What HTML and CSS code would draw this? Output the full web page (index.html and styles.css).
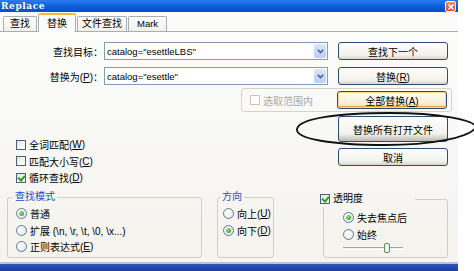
FILE: index.html
```html
<!DOCTYPE html>
<html lang="zh-CN">
<head>
    <meta charset="UTF-8">
    <title>Replace</title>
    <link rel="stylesheet" href="styles.css">
</head>
<body>
    <div class="window">
        <div class="titlebar">
            <span class="title">Replace</span>
            <span class="close">
                <svg width="8" height="8" viewBox="0 0 8 8"><path d="M1.5 1.5 L6.5 6.5 M6.5 1.5 L1.5 6.5" stroke="#fff" stroke-width="1.6"/></svg>
            </span>
        </div>

        <div class="tabs">
            <div class="tab">查找</div>
            <div class="tab active">替换</div>
            <div class="tab narrow">文件查找</div>
            <div class="tab latin">Mark</div>
        </div>

        <div class="panel">
            <div class="field-row">
                <label class="field-label">查找目标：</label>
                <div class="combo">
                    <span class="combo-text">catalog="esettleLBS"</span>
                    <span class="combo-arrow"><svg width="7" height="5" viewBox="0 0 7 5"><path d="M0.8 0.8 L3.5 3.6 L6.2 0.8" fill="none" stroke="#4d6185" stroke-width="1.5"/></svg></span>
                </div>
                <button class="btn">查找下一个</button>
            </div>
            <div class="field-row">
                <label class="field-label">替换为(<u>P</u>)：</label>
                <div class="combo">
                    <span class="combo-text">catalog="esettle"</span>
                    <span class="combo-arrow"><svg width="7" height="5" viewBox="0 0 7 5"><path d="M0.8 0.8 L3.5 3.6 L6.2 0.8" fill="none" stroke="#4d6185" stroke-width="1.5"/></svg></span>
                </div>
                <button class="btn">替换(<u>R</u>)</button>
            </div>

            <div class="scope-box">
                <span class="check disabled"><span class="box"></span>选取范围内</span>
                <button class="btn default">全部替换(<u>A</u>)</button>
            </div>

            <div class="middle">
                <div class="options">
                    <span class="check"><span class="box"></span>全词匹配(<u>W</u>)</span>
                    <span class="check"><span class="box"></span>匹配大小写(<u>C</u>)</span>
                    <span class="check"><span class="box checked"></span>循环查找(<u>D</u>)</span>
                </div>
                <div class="side-buttons">
                    <button class="btn tall">替换所有打开文件</button>
                    <button class="btn">取消</button>
                </div>
            </div>

            <div class="groups">
                <fieldset class="group mode">
                    <legend>查找模式</legend>
                    <span class="radio"><span class="dot on"></span>普通</span>
                    <span class="radio"><span class="dot"></span>扩展 (\n, \r, \t, \0, \x...)</span>
                    <span class="radio"><span class="dot"></span>正则表达式(<u>E</u>)</span>
                </fieldset>
                <fieldset class="group direction">
                    <legend>方向</legend>
                    <span class="radio"><span class="dot"></span>向上(<u>U</u>)</span>
                    <span class="radio"><span class="dot on"></span>向下(<u>D</u>)</span>
                </fieldset>
                <fieldset class="group opacity">
                    <legend><span class="check"><span class="box checked"></span>透明度</span></legend>
                    <span class="radio"><span class="dot on"></span>失去焦点后</span>
                    <span class="radio"><span class="dot"></span>始终</span>
                    <div class="slider"><span class="track"></span><span class="thumb"></span></div>
                </fieldset>
            </div>
        </div>

        <div class="bottom-bar"></div>
    </div>

    <!-- hand-drawn annotation around the button -->
    <svg class="annotation" width="474" height="271" viewBox="0 0 474 271">
        <path d="M297 129 C299 118 340 113 390 113 C440 113 474 120 476 127 C470 138 430 145 385 145 C333 145 295 139 297 129 Z" fill="none" stroke="#111" stroke-width="1.8"/>
    </svg>
</body>
</html>
```

FILE: styles.css
```css
body {
    margin: 0;
    width: 474px;
    height: 271px;
    overflow: hidden;
    position: relative;
    background: #fff;
    font-family: "Liberation Sans", "Noto Sans CJK SC", sans-serif;
    font-size: 10px;
    color: #000;
}
u {
    text-decoration: underline;
}
.window {
    width: 458px;
    height: 271px;
    display: flex;
    flex-direction: column;
    background: #f6f5f0;
}
.titlebar {
    height: 12px;
    display: flex;
    align-items: center;
    justify-content: space-between;
    background: linear-gradient(#2d7bf0, #0a5ad8 60%, #0850c8);
    color: #fff;
}
.title {
    font-family: "DejaVu Serif", serif;
    font-weight: bold;
    font-size: 9px;
    letter-spacing: 0.6px;
    line-height: 12px;
    padding-left: 1px;
}
.close {
    width: 9px;
    height: 9px;
    margin-right: 2px;
    margin-top: 1px;
    display: flex;
    align-items: center;
    justify-content: center;
    background: linear-gradient(#f08a6c, #d9481f);
    border: 1px solid #fff;
    border-radius: 2px;
}
.tabs {
    height: 20px;
    display: flex;
    align-items: flex-end;
    padding-left: 3px;
    background: #fbfbf9;
}
.tab {
    height: 14px;
    line-height: 14px;
    padding: 0 6px;
    border: 1px solid #a8afb0;
    border-bottom: none;
    border-radius: 2px 2px 0 0;
    background: linear-gradient(#fefefe, #f1f0ea);
    font-size: 10px;
}
.tab.narrow {
    padding: 0 4px;
}
.tab.latin {
    font-size: 9.5px;
    padding: 0 8px;
}
.tab.active {
    height: 17px;
    line-height: 17px;
    margin-bottom: -1px;
    background: #fcfcfe;
    border-top: 2px solid #f5b93d;
    padding: 0 8px;
    position: relative;
}
.tab + .tab {
    margin-left: 1px;
}
.panel {
    flex: 1;
    box-sizing: border-box;
    padding: 10px 0 0 7px;
    border-top: 1px solid #a8afb0;
    background: linear-gradient(#fcfcfb, #f4f3ee);
}
.field-row {
    display: flex;
    align-items: center;
    height: 18px;
}
.field-row + .field-row {
    margin-top: 7px;
}
.field-label {
    width: 97px;
    box-sizing: border-box;
    padding-right: 1px;
    text-align: right;
    font-size: 10px;
}
.combo {
    width: 224px;
    height: 18px;
    box-sizing: border-box;
    border: 1px solid #7f9db9;
    background: #fff;
    display: flex;
    align-items: center;
    justify-content: space-between;
    padding: 0 1px 0 2px;
}
.combo-text {
    font-size: 9.5px;
}
.combo-arrow {
    width: 12px;
    height: 14px;
    display: flex;
    align-items: center;
    justify-content: center;
    background: linear-gradient(#dbe6fd, #b9cdf8);
    border-radius: 2px;
}
.btn {
    width: 110px;
    height: 18px;
    margin: 0 0 0 10px;
    padding: 0;
    border: 1px solid #2f4c72;
    border-radius: 3px;
    background: linear-gradient(#fefefe, #f3f2ec 75%, #d8d4c8);
    font-family: inherit;
    font-size: 10px;
    color: #000;
}
.btn.default {
    margin: 0;
    background: linear-gradient(#fffdf1, #f5efd6 75%, #e8ca84);
    box-shadow: inset 0 0 0 1px #f8d889, inset 0 -2px 0 #eba836;
}
.btn.tall {
    height: 26px;
    background: linear-gradient(#fefefe, #f3f2ec 70%, #bdbab0);
}
.scope-box {
    width: 211px;
    height: 24px;
    box-sizing: border-box;
    margin: 3px 0 0 234px;
    border: 1px solid #d6d4c9;
    border-radius: 3px;
    display: flex;
    align-items: center;
    justify-content: space-between;
    padding: 0 4px 0 8px;
}
.check {
    display: flex;
    align-items: center;
    height: 16px;
    font-size: 10px;
}
.check.disabled {
    color: #aca899;
}
.box {
    width: 10px;
    height: 10px;
    box-sizing: border-box;
    border: 1px solid #4a5f78;
    background: linear-gradient(135deg, #e6e5dd, #fff);
    margin-right: 3px;
    position: relative;
}
.check.disabled .box {
    border-color: #c9c7ba;
    background: #fff;
}
.box.checked::after {
    content: "";
    position: absolute;
    left: 2px;
    top: 0px;
    width: 3px;
    height: 5px;
    border: solid #21a121;
    border-width: 0 2px 2px 0;
    transform: rotate(40deg);
}
.middle {
    display: flex;
    height: 79px;
}
.options {
    width: 200px;
    padding: 24px 0 0 9px;
    box-sizing: border-box;
    display: flex;
    flex-direction: column;
}
.options .check {
    height: 16.5px;
}
.side-buttons {
    margin-left: 121px;
    padding-top: 4px;
    display: flex;
    flex-direction: column;
    gap: 6px;
}
.groups {
    display: flex;
    height: 67px;
}
.group {
    margin: 0;
    padding: 2px 0 0 8px;
    border: 1px solid #d0cfc2;
    border-radius: 3px;
    box-sizing: border-box;
    height: 67px;
    display: flex;
    flex-direction: column;
}
.group legend {
    padding: 0 2px;
    margin-left: -3px;
    color: #1f4fc8;
    line-height: 12px;
    font-size: 10px;
}
.group.mode {
    width: 195px;
}
.group.direction {
    width: 57px;
    margin-left: 15px;
    padding-left: 5px;
}
.group.opacity {
    width: 125px;
    margin-left: 49px;
    padding-left: 19px;
}
.group.opacity legend {
    margin-left: -23px;
    width: 95px;
    padding: 0;
    color: #000;
}
.radio {
    display: flex;
    align-items: center;
    height: 16.5px;
    font-size: 10px;
}
.dot {
    width: 11px;
    height: 11px;
    box-sizing: border-box;
    border: 1px solid #5d7896;
    border-radius: 50%;
    background: radial-gradient(circle at 35% 35%, #fff, #e4e3dc);
    margin-right: 3px;
    display: flex;
    align-items: center;
    justify-content: center;
}
.dot.on::after {
    content: "";
    width: 5px;
    height: 5px;
    border-radius: 50%;
    background: radial-gradient(circle at 35% 35%, #8fe08f, #1f9a1f);
}
.slider {
    position: relative;
    height: 12px;
    width: 60px;
}
.track {
    position: absolute;
    left: 0;
    right: 0;
    top: 5px;
    height: 1px;
    border-top: 1px solid #a6a59c;
    border-bottom: 1px solid #fff;
}
.thumb {
    position: absolute;
    left: 41px;
    top: 1px;
    width: 4px;
    height: 8px;
    border: 1px solid #5f8a5f;
    border-radius: 2px;
    background: #f2f2ea;
}
.bottom-bar {
    height: 7px;
    margin-top: 4px;
    border-top: 2px solid #b8c2dc;
    background: linear-gradient(#2e55b8, #1c3f9c);
}
.annotation {
    position: absolute;
    left: 0;
    top: 0;
    pointer-events: none;
}
```
